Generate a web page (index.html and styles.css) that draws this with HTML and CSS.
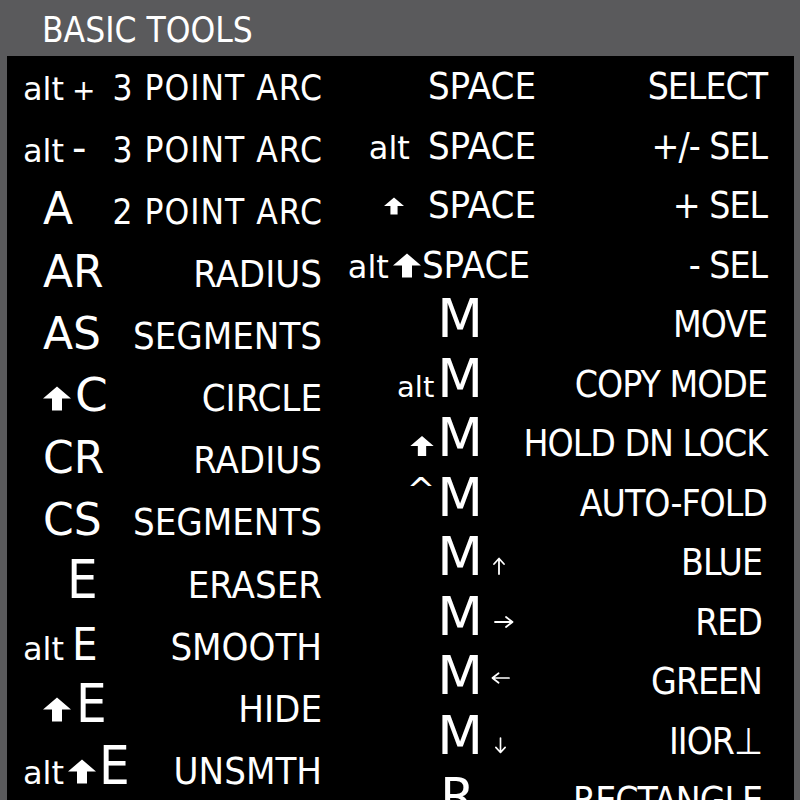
FILE: index.html
```html
<!DOCTYPE html>
<html>
<head>
<meta charset="utf-8">
<link rel="stylesheet" href="styles.css">
</head>
<body>
<header class="title">BASIC TOOLS</header>
<main class="panel">
  <section class="col col-left">
    <div class="row"><span class="key"><span class="alt">alt</span><span class="op">+</span></span><span class="label sm">3 POINT ARC</span></div>
    <div class="row"><span class="key"><span class="alt">alt</span><span class="op dash">-</span></span><span class="label sm">3 POINT ARC</span></div>
    <div class="row"><span class="key ind"><span class="big">A</span></span><span class="label sm">2 POINT ARC</span></div>
    <div class="row"><span class="key ind"><span class="big">AR</span></span><span class="label">RADIUS</span></div>
    <div class="row"><span class="key ind"><span class="big">AS</span></span><span class="label">SEGMENTS</span></div>
    <div class="row"><span class="key ind"><svg class="arrow a-lg" viewBox="0 0 28 24"><path d="M14 0 L28 12 L19 12 L19 24 L9 24 L9 12 L0 12 Z"/></svg><span class="big c">C</span></span><span class="label">CIRCLE</span></div>
    <div class="row"><span class="key ind"><span class="big">CR</span></span><span class="label">RADIUS</span></div>
    <div class="row"><span class="key ind"><span class="big">CS</span></span><span class="label">SEGMENTS</span></div>
    <div class="row"><span class="key ind2"><span class="huge">E</span></span><span class="label">ERASER</span></div>
    <div class="row"><span class="key"><span class="alt">alt</span><span class="big e-mid">E</span></span><span class="label">SMOOTH</span></div>
    <div class="row"><span class="key ind"><svg class="arrow a-lg" viewBox="0 0 28 24"><path d="M14 0 L28 12 L19 12 L19 24 L9 24 L9 12 L0 12 Z"/></svg><span class="huge">E</span></span><span class="label">HIDE</span></div>
    <div class="row"><span class="key"><span class="alt tight">alt</span><svg class="arrow a-lg" viewBox="0 0 28 24"><path d="M14 0 L28 12 L19 12 L19 24 L9 24 L9 12 L0 12 Z"/></svg><span class="huge e-last">E</span></span><span class="label">UNSMTH</span></div>
  </section>
  <section class="col col-right">
    <div class="row"><span class="key sp"><span class="word">SPACE</span></span><span class="label">SELECT</span></div>
    <div class="row"><span class="key sp"><span class="alt">alt</span><span class="word">SPACE</span></span><span class="label">+/- SEL</span></div>
    <div class="row"><span class="key sp"><svg class="arrow a-sm" viewBox="0 0 28 24"><path d="M14 0 L28 12 L19 12 L19 24 L9 24 L9 12 L0 12 Z"/></svg><span class="word">SPACE</span></span><span class="label">+ SEL</span></div>
    <div class="row"><span class="key sp2"><span class="alt tight">alt</span><svg class="arrow a-lg a-tight" viewBox="0 0 28 24"><path d="M14 0 L28 12 L19 12 L19 24 L9 24 L9 12 L0 12 Z"/></svg><span class="word">SPACE</span></span><span class="label">- SEL</span></div>
    <div class="row"><span class="key"><span class="mm">M</span><span class="sfx"></span></span><span class="label">MOVE</span></div>
    <div class="row"><span class="key"><span class="alt small-alt">alt</span><span class="mm">M</span><span class="sfx"></span></span><span class="label">COPY MODE</span></div>
    <div class="row"><span class="key"><svg class="arrow a-m" viewBox="0 0 28 24"><path d="M14 0 L28 12 L19 12 L19 24 L9 24 L9 12 L0 12 Z"/></svg><span class="mm">M</span><span class="sfx"></span></span><span class="label">HOLD DN LOCK</span></div>
    <div class="row"><span class="key"><span class="caret">^</span><span class="mm">M</span><span class="sfx"></span></span><span class="label">AUTO-FOLD</span></div>
    <div class="row"><span class="key"><span class="mm">M</span><span class="sfx"><svg class="thin up" viewBox="0 0 14 18"><path d="M7 17 V2 M2 7 L7 1.5 L12 7"/></svg></span></span><span class="label nar">BLUE</span></div>
    <div class="row"><span class="key"><span class="mm">M</span><span class="sfx"><svg class="thin right" viewBox="0 0 20 12"><path d="M1 6 H18 M12 1 L18.5 6 L12 11"/></svg></span></span><span class="label nar">RED</span></div>
    <div class="row"><span class="key"><span class="mm">M</span><span class="sfx"><svg class="thin left" viewBox="0 0 20 12"><path d="M19 6 H2 M8 1 L1.5 6 L8 11"/></svg></span></span><span class="label nar">GREEN</span></div>
    <div class="row"><span class="key"><span class="mm">M</span><span class="sfx"><svg class="thin down" viewBox="0 0 14 18"><path d="M7 1 V16 M2 11 L7 16.5 L12 11"/></svg></span></span><span class="label nar">IIOR&#8869;</span></div>
    <div class="row"><span class="key"><span class="mm r">R</span><span class="sfx"></span></span><span class="label nar">RECTANGLE</span></div>
  </section>
</main>
</body>
</html>
```

FILE: styles.css
```css
html, body {
  margin: 0;
  padding: 0;
  background: #5a5a5c;
}

body {
  width: 800px;
  height: 800px;
  overflow: hidden;
  color: #ffffff;
  font-family: "DejaVu Sans", sans-serif;
}

.title {
  height: 56px;
  box-sizing: border-box;
  padding: 4px 0 0 42px;
  line-height: 52px;
  font-size: 35px;
  font-family: "DejaVu Sans Condensed", "DejaVu Sans", sans-serif;
  font-stretch: condensed;
  font-weight: normal;
}

.panel {
  margin-left: 7px;
  width: 787px;
  height: 744px;
  background: #000000;
  display: grid;
  grid-template-columns: 333px minmax(0, 1fr);
  overflow: hidden;
}

.col {
  display: flex;
  flex-direction: column;
  min-width: 0;
}

.row {
  display: grid;
  grid-template-columns: 0 124px minmax(0, 1fr);
  align-items: baseline;
  white-space: nowrap;
  flex: none;
}

.col-right .row {
  grid-template-columns: 0 200px minmax(0, 1fr);
}

.row::before {
  content: "\200b";
  grid-column: 1;
  grid-row: 1;
  font-size: 38px;
}

.col-left .row {
  height: 62.2px;
}

.col-left .row::before {
  line-height: 62.2px;
}

.col-right {
  padding-top: 1px;
}

.col-right .row {
  height: 59.5px;
}

.col-right .row::before {
  line-height: 59.5px;
}

.key,
.label {
  grid-row: 1;
  line-height: 0.8;
}

.key {
  grid-column: 2;
  font-size: 32px;
  box-sizing: border-box;
}

.label {
  grid-column: 2 / 4;
  text-align: right;
  font-size: 38px;
  font-family: "DejaVu Sans Condensed", "DejaVu Sans", sans-serif;
  font-stretch: condensed;
}

.col-left .label {
  padding-right: 18px;
}

.col-left .label.sm {
  font-size: 35px;
  letter-spacing: 1px;
  margin-right: -1px;
}

.col-right .label {
  padding-right: 27px;
  font-size: 37px;
  letter-spacing: -1px;
}

.col-right .label.nar {
  padding-right: 32px;
}

/* keys */
.col-left .key {
  padding-left: 16px;
}

.col-left .key.ind {
  padding-left: 36px;
}

.col-left .key.ind2 {
  padding-left: 58px;
}

.col-right .key {
  text-align: right;
}

.col-right .key.sp {
  padding-right: 4px;
}

.col-right .key.sp2 {
  padding-right: 10px;
}

.alt {
  font-size: 32px;
  margin-right: 8px;
}

.alt.tight {
  margin-right: 4px;
}

.alt.small-alt {
  font-size: 29px;
  margin-right: 3px;
}

.op {
  font-size: 28px;
}

.op.dash {
  font-size: 40px;
}

.big {
  font-size: 44px;
}

.big.c {
  font-size: 47px;
  margin-left: 1px;
}

.big.e-mid {
  font-size: 45px;
  font-family: "DejaVu Sans Condensed", "DejaVu Sans", sans-serif;
  font-stretch: condensed;
}

.huge {
  font-size: 54px;
  margin-left: 2px;
  font-family: "DejaVu Sans Condensed", "DejaVu Sans", sans-serif;
  font-stretch: condensed;
}

.huge.e-last {
  margin-left: 0;
}

.word {
  font-size: 38px;
  font-family: "DejaVu Sans Condensed", "DejaVu Sans", sans-serif;
  font-stretch: condensed;
}

.alt + .word {
  margin-left: 10px;
}

.mm {
  font-size: 53px;
}

.mm.r {
  font-size: 50px;
  margin-right: 8px;
}

.caret {
  font-size: 34px;
  vertical-align: 14px;
  margin-right: 2px;
}

.sfx {
  display: inline-block;
  width: 57px;
  text-align: left;
}

/* arrows */
.arrow {
  fill: #ffffff;
  vertical-align: baseline;
}

.a-lg {
  width: 28px;
  height: 25px;
  margin-right: 3px;
}

.a-lg.a-tight {
  margin-right: 1px;
}

.a-sm {
  width: 20px;
  height: 22px;
  margin-right: 24px;
  vertical-align: 1px;
}

.a-m {
  width: 28px;
  height: 20px;
  margin-right: 1px;
}

.thin {
  fill: none;
  stroke: #ffffff;
  stroke-width: 1.8;
  stroke-linecap: round;
  stroke-linejoin: round;
}

.thin.up {
  width: 14px;
  height: 18px;
  margin-left: 9px;
}

.thin.down {
  width: 13px;
  height: 17px;
  margin-left: 11px;
}

.thin.right {
  width: 20px;
  height: 12px;
  margin-left: 11px;
  vertical-align: 7px;
}

.thin.left {
  width: 19px;
  height: 12px;
  margin-left: 8px;
  vertical-align: 10px;
}
```
